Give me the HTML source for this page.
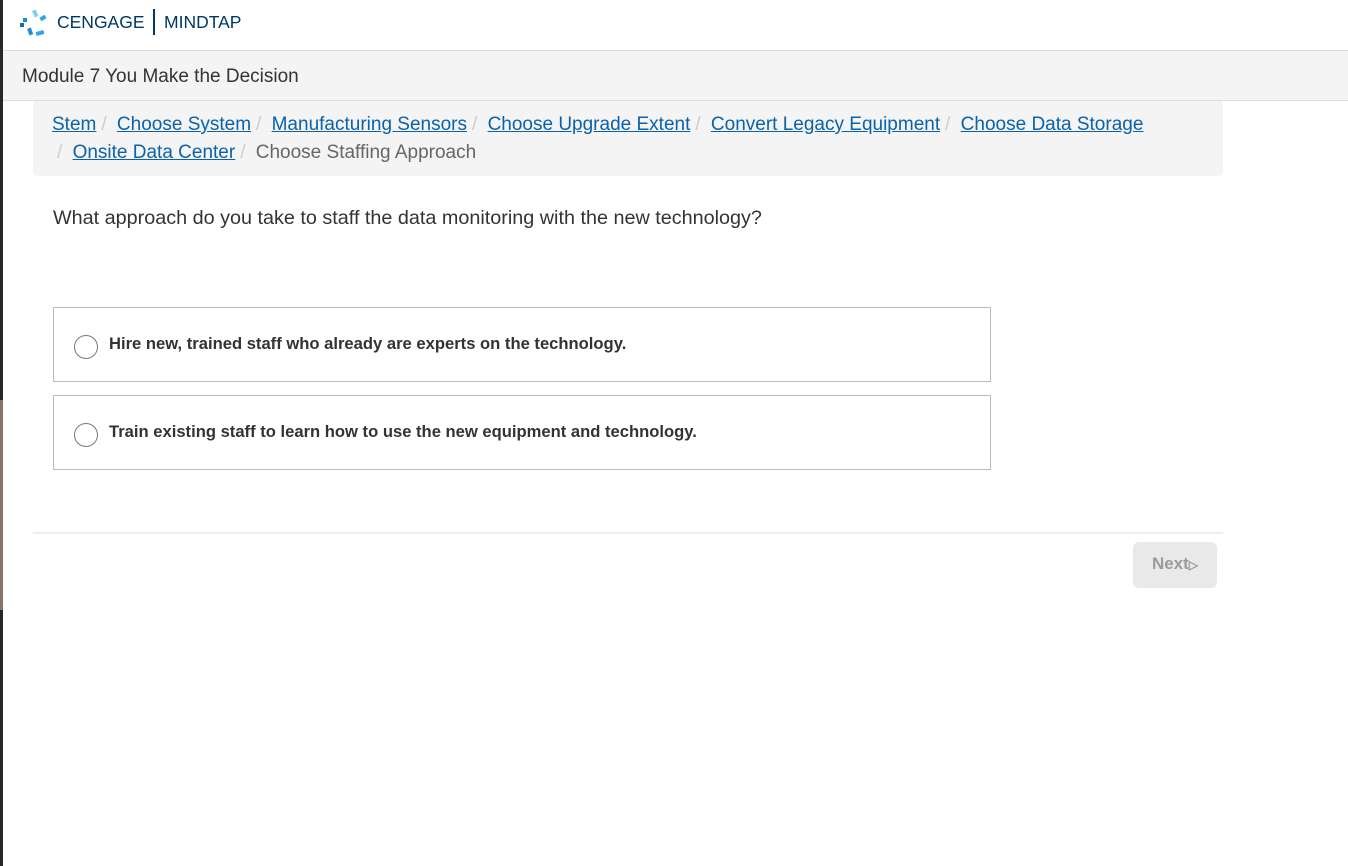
<!DOCTYPE html>
<html><head><meta charset="utf-8"><style>
body{margin:0;width:1348px;height:866px;background:#fff;font-family:"Liberation Sans",sans-serif;position:relative;overflow:hidden}
.strip{position:absolute;left:0;top:0;width:3px;height:866px;background:#23282d}
.strip2{position:absolute;left:0;top:400px;width:3px;height:210px;background:#8a7468}
.hdr{position:absolute;left:3px;top:0;right:0;height:50px;border-bottom:1px solid #ddd;background:#fff}
.mod{position:absolute;left:3px;top:51px;right:0;height:49px;background:#f4f4f4;border-bottom:1px solid #ddd;font-size:19px;color:#333;line-height:51px;padding-left:19px}
.bc{position:absolute;left:33px;top:101px;width:1190px;height:75px;background:#f4f4f4;border-radius:0 0 5px 5px;font-size:19px;line-height:28px;box-sizing:border-box;padding:10px 0 0 19px;color:#666}
.bc a{color:#0b62a8;text-decoration:underline}
.bc .s{color:#ccc;padding:0 5px 0 5px}
.q{position:absolute;left:53px;top:207px;font-size:19.8px;color:#333}
.opt{position:absolute;left:53px;width:936px;height:73px;border:1px solid #bbb;font-weight:bold;font-size:16.6px;color:#333}
.opt .r{position:absolute;left:20px;top:27px;width:22px;height:22px;border:1.5px solid #777;border-radius:50%}
.opt span{position:absolute;left:55px;top:26px}
.hr{position:absolute;left:33px;top:532px;width:1190px;height:2px;background:#eee}
.nx{position:absolute;left:1133px;top:542px;width:84px;height:46px;background:#e9e9e9;border-radius:6px;color:#9a9a9a;font-weight:bold;font-size:17px;line-height:44px;text-align:center}
.nx small{font-size:12px}
</style></head><body>
<div class="strip"></div><div class="strip2"></div>
<div class="hdr">
<svg style="position:absolute;left:17px;top:9px" width="30" height="28" viewBox="0 0 30 28">
<rect x="13" y="1" width="4" height="7" fill="#7fd0f0" transform="rotate(-25 15 4)"/>
<rect x="20" y="7" width="6" height="4" fill="#2ea8e0" transform="rotate(-30 23 9)"/>
<rect x="3" y="9" width="4" height="4" fill="#1a90cf"/>
<rect x="0" y="14" width="4" height="4" fill="#0f6fb0"/>
<rect x="8" y="19" width="4" height="7" fill="#1a90cf" transform="rotate(-20 10 22)"/>
<rect x="16" y="22" width="8" height="4" fill="#2ea8e0" transform="rotate(-15 20 24)"/>
</svg>
<div style="position:absolute;left:54px;top:12px;font-size:17.5px;color:#003865">CENGAGE</div>
<div style="position:absolute;left:150px;top:9px;width:2px;height:26px;background:#003865"></div>
<div style="position:absolute;left:161px;top:12px;font-size:17.5px;color:#003865">MINDTAP</div>
</div>
<div class="mod">Module 7 You Make the Decision</div>
<div class="bc"><a>Stem</a><span class="s">/</span> <a>Choose System</a><span class="s">/</span> <a>Manufacturing Sensors</a><span class="s">/</span> <a>Choose Upgrade Extent</a><span class="s">/</span> <a>Convert Legacy Equipment</a><span class="s">/</span> <a>Choose Data Storage</a><br><span class="s">/</span> <a>Onsite Data Center</a><span class="s">/</span> Choose Staffing Approach</div>
<div class="q">What approach do you take to staff the data monitoring with the new technology?</div>
<div class="opt" style="top:307px"><div class="r"></div><span>Hire new, trained staff who already are experts on the technology.</span></div>
<div class="opt" style="top:395px"><div class="r"></div><span>Train existing staff to learn how to use the new equipment and technology.</span></div>
<div class="hr"></div>
<div class="nx">Next<small>&#9655;</small></div>
</body></html>
